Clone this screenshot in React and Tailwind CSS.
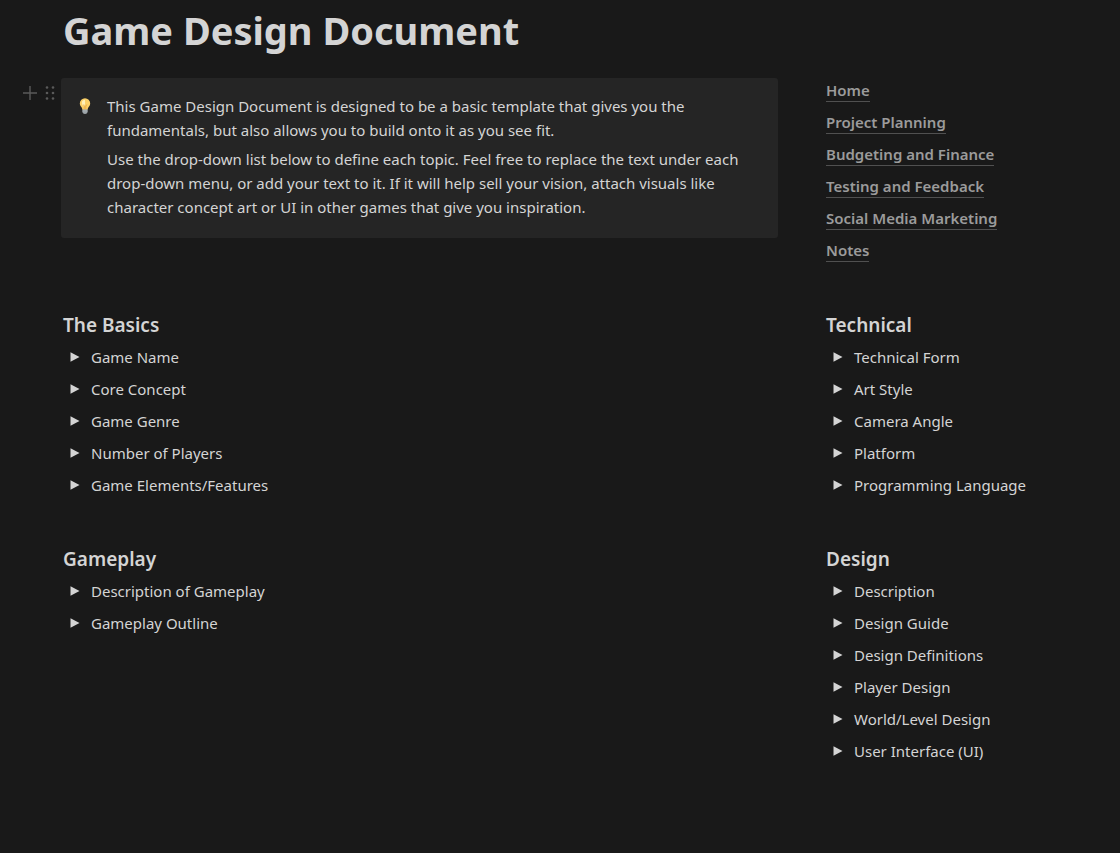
const basics = ["Game Name", "Core Concept", "Game Genre", "Number of Players", "Game Elements/Features"];
const technical = ["Technical Form", "Art Style", "Camera Angle", "Platform", "Programming Language"];
const gameplay = ["Description of Gameplay", "Gameplay Outline"];
const design = ["Description", "Design Guide", "Design Definitions", "Player Design", "World/Level Design", "User Interface (UI)"];
const links = ["Home", "Project Planning", "Budgeting and Finance", "Testing and Feedback", "Social Media Marketing", "Notes"];

function ToggleList({ title, items }) {
  return (
    <section>
      <h2 className="px-0.5 text-[19px] leading-[26px] font-semibold">{title}</h2>
      <ul className="mt-[3px]">
        {items.map((item) => (
          <li key={item}>
            <button type="button" aria-expanded="false" className="flex h-8 items-center text-left">
              <span className="flex w-[30px] justify-center pr-[3px]">
                <svg viewBox="0 0 10 10" className="h-[10px] w-[10px] fill-[#d4d4d4]" aria-hidden="true">
                  <path d="M0.5 0.3 9.5 5 0.5 9.7z" />
                </svg>
              </span>
              {item}
            </button>
          </li>
        ))}
      </ul>
    </section>
  );
}

export default function App() {
  return (
    <div className="min-h-screen bg-[#191919] pr-4 pl-[61px] font-['Noto_Sans',sans-serif] text-[15px] leading-6 text-[#d4d4d4]">
      <h1 className="px-0.5 pt-1 text-[38px] leading-[52px] font-bold">Game Design Document</h1>
      <main className="grid grid-cols-[minmax(0,717fr)_minmax(0,280fr)] gap-x-[46px] pt-[22px]">
        <div className="relative">
          <div className="absolute top-2 right-full flex items-center gap-2 pr-[6px] text-[#5a5a5a]">
            <button type="button" aria-label="Add block">
              <svg viewBox="0 0 14 14" className="block h-[14px] w-[14px]" fill="none" stroke="currentColor" strokeWidth="1.4">
                <path d="M7 0v14M0 7h14" />
              </svg>
            </button>
            <button type="button" aria-label="Move block">
              <svg viewBox="0 0 10 14" className="block h-[14px] w-[10px]" fill="currentColor">
                <circle cx="2" cy="1.500" r="1.300" />
                <circle cx="8" cy="1.500" r="1.300" />
                <circle cx="2" cy="7" r="1.300" />
                <circle cx="8" cy="7" r="1.300" />
                <circle cx="2" cy="12.500" r="1.300" />
                <circle cx="8" cy="12.500" r="1.300" />
              </svg>
            </button>
          </div>
          <aside className="flex rounded-[3px] bg-[#252525] pt-4 pr-4 pb-[19px] pl-4">
            <svg viewBox="0 0 16 16" className="mt-1 h-4 w-4 shrink-0" aria-hidden="true">
              <path fill="#fbd068" d="M8 0.3a5.200 5.200 0 0 0-5.200 5.200c0 2 1.300 3 2 4.200.4.7.5 1.400.6 2h5.200c.1-.6.2-1.300.6-2 .7-1.200 2-2.200 2-4.200A5.200 5.200 0 0 0 8 0.300z" />
              <path fill="#fff0b8" d="M5 3.500a3.500 3.500 0 0 1 3-1.700v3.500L7 9 5.200 6.500z" />
              <path fill="none" stroke="#e09a3a" strokeWidth="0.7" d="M6.200 6.500 7.200 8v3.500M9.800 6.500 8.800 8v3.500" />
              <path fill="#b5bcc0" d="M5.400 11.500h5.200v2.500L9.300 15.700H6.700L5.400 14z" />
              <path stroke="#82898d" strokeWidth="0.6" d="M5.400 13h5.200M5.700 14.300h4.600" />
            </svg>
            <div className="ml-[14px]">
              <p>This Game Design Document is designed to be a basic template that gives you the fundamentals, but also allows you to build onto it as you see fit.</p>
              <p className="mt-[5px]">Use the drop-down list below to define each topic. Feel free to replace the text under each drop-down menu, or add your text to it. If it will help sell your vision, attach visuals like character concept art or UI in other games that give you inspiration.</p>
            </div>
          </aside>
        </div>
        <nav className="px-0.5 pt-[2px]">
          <ul>
            {links.map((link) => (
              <li key={link} className="flex h-8 items-start leading-[21px] font-semibold text-[#9b9b9b]">
                <a href="#" className="border-b border-[#505050]">{link}</a>
              </li>
            ))}
          </ul>
        </nav>
        <div className="pt-10"><ToggleList title="The Basics" items={basics} /></div>
        <div className="pt-10"><ToggleList title="Technical" items={technical} /></div>
        <div className="pt-[45px]"><ToggleList title="Gameplay" items={gameplay} /></div>
        <div className="pt-[45px]"><ToggleList title="Design" items={design} /></div>
      </main>
    </div>
  );
}
